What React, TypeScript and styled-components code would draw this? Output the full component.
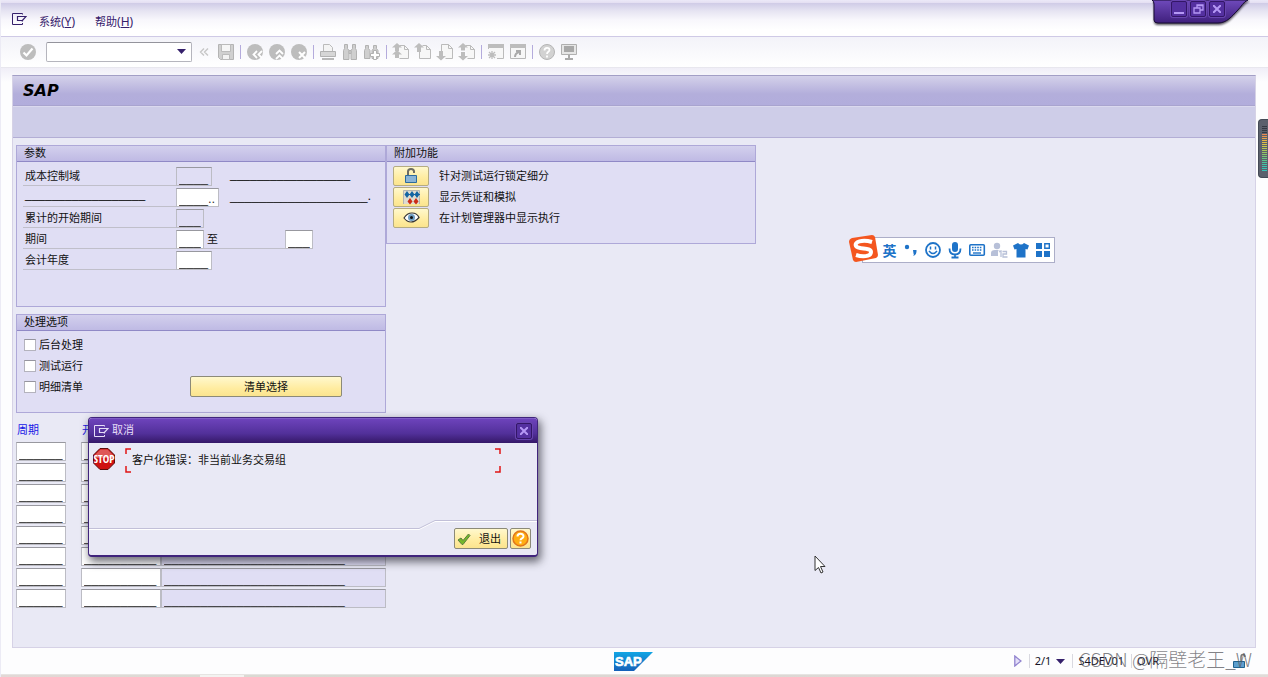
import React from "react";
import styled, { createGlobalStyle, css } from "styled-components";

const GlobalStyle = createGlobalStyle`
  * { box-sizing: border-box; }
  body {
    margin: 0;
    background: #fdfdfe;
    color: #111;
    font: 11px/16px "Noto Sans", "Noto Sans CJK SC", sans-serif;
  }
  button, input { font: inherit; color: inherit; margin: 0; }
  svg { display: block; }
`;

/* ---------- shell ---------- */

const Screen = styled.div`
  position: relative;
  display: flex;
  flex-direction: column;
  min-height: 100vh;
  overflow: hidden;
  border-left: 1px solid #ecebf5;
`;

const MenuBar = styled.nav`
  display: flex;
  align-items: center;
  height: 37px;
  padding: 8px 11px 0;
  border-bottom: 1px solid #cfcae6;
  background: linear-gradient(#ece9f8 0, #e4dff2 3px, #cfcbe6 3px, #e6e4f2 11px, #f8f7fc 20px, #fff 30px);
  color: #35206b;
`;

const MenuIcon = styled.span`
  margin: -6px 12px 0 0;
`;

const MenuItem = styled.button`
  height: 20px;
  margin-right: 20px;
  padding: 0;
  border: 0;
  background: none;
  font-size: 11px;
`;

const Mnemonic = styled.span`
  font-size: 12px;
`;

const ToolBar = styled.div`
  display: flex;
  align-items: center;
  height: 31px;
  padding: 0 0 1px 16px;
  border-bottom: 1px solid #e8e7ee;
  background: linear-gradient(#f3f3f9, #fff);
`;

const ToolButton = styled.button`
  display: grid;
  place-items: center;
  width: 22px;
  height: 22px;
  padding: 0;
  border: 0;
  background: none;
  color: #bdbdbd;
`;

const Separator = styled.span`
  width: 1px;
  height: 14px;
  margin: 0 3px;
  background: #b4abdc;
`;

const CommandBox = styled.div`
  display: flex;
  align-items: center;
  width: 146px;
  height: 20px;
  margin: 0 1px 0 7px;
  border: 1px solid #b5b5bd;
  border-top-color: #94949c;
  border-radius: 2px;
  background: #fff;
`;

const CommandInput = styled.input`
  flex: 1;
  min-width: 0;
  height: 16px;
  border: 0;
  outline: 0;
  background: none;
`;

const BareButton = styled.button`
  display: grid;
  place-items: center;
  width: 20px;
  height: 16px;
  padding: 0;
  border: 0;
  background: none;
`;

const Workspace = styled.main`
  display: flex;
  flex: 1;
  flex-direction: column;
  padding: 7px 12px 0 11px;
  background: linear-gradient(#f0eef7, #fdfdfe 14px);
`;

const Frame = styled.section`
  flex: 1;
  border: 1px solid #d6d2e6;
  border-top-color: #a39fc6;
  background: #e9e9f5;
`;

const TitleBand = styled.header`
  height: 30px;
  padding: 0 10px;
  border-bottom: 1px solid #a9a4cf;
  background: linear-gradient(#d4d1ea, #b3aedb 18px, #b2addc);
`;

const Title = styled.h1`
  margin: 0;
  color: #000;
  font: italic bold 16px/30px "DejaVu Sans", sans-serif;
`;

const ActionBand = styled.div`
  height: 32px;
  border-top: 1px solid #dbd9ee;
  border-bottom: 1px solid #b3aed5;
  background: #cecde8;
`;

const Content = styled.div`
  display: grid;
  grid-template-columns: minmax(0, 370px) minmax(0, 370px);
  align-items: start;
  padding: 7px 3px 38px;
`;

/* ---------- panels ---------- */

const Panel = styled.section<{ $height: number }>`
  min-height: ${(p) => p.$height}px;
  border: 1px solid #aea8d8;
  background: #e0def4;
`;

const PanelTitle = styled.h2`
  height: 16px;
  margin: 0;
  padding-left: 7px;
  border-bottom: 1px solid #9089c6;
  background: linear-gradient(#d3d0ed, #bfbae4);
  font-size: 11px;
  font-weight: 400;
  line-height: 14px;
`;

const PanelBody = styled.div`
  padding: 3px 6px;
`;

const Column = styled.div`
  display: flex;
  flex-direction: column;
`;

const FieldRow = styled.div`
  display: flex;
  align-items: flex-end;
  height: 21px;
`;

const FieldLabel = styled.label`
  width: 153px;
  height: 21px;
  padding-left: 2px;
  overflow: hidden;
  border-bottom: 1px solid #c0bfca;
  font-size: 11px;
  line-height: 22px;
  white-space: nowrap;
`;

const Blank = styled.span<{ $size?: number }>`
  display: block;
  height: 20px;
  font: ${(p) => p.$size ?? 13}px/17px "Liberation Sans", sans-serif;
  white-space: nowrap;
`;

const RangeLabel = styled(FieldLabel)`
  width: 81px;
  padding-left: 3px;
`;

const Description = styled(Blank)`
  margin-left: auto;
  width: 149px;
`;

const fieldLook = css`
  height: 19px;
  padding: 2px 2px 0;
  border: 1px solid #bcbcc4;
  border-top-color: #98989f;
  border-radius: 0;
  outline: 0;
  background: #fff;
  color: #333;
  font: 13px/15px "Liberation Sans", sans-serif;
`;

const Field = styled.input<{ $width: number }>`
  ${fieldLook}
  width: ${(p) => p.$width}px;
  &:read-only { background: #e0def4; }
`;

const CheckRow = styled.div`
  display: flex;
  align-items: center;
  height: 21px;
  margin-left: 1px;
`;

const CheckLabel = styled.label`
  display: flex;
  align-items: center;
  gap: 3px;
`;

const CheckBox = styled.input`
  appearance: none;
  width: 12px;
  height: 12px;
  border: 1px solid #b4b3bd;
  border-top-color: #96959f;
  background: #fff;
  &:checked { background: #6b4fb0; }
`;

const yellow = css`
  border: 1px solid #8c8a78;
  border-radius: 2px;
  background: linear-gradient(#fff8cd, #ffeca0 60%, #fbe48e);
`;

const ListButton = styled.button`
  ${yellow}
  width: 152px;
  height: 21px;
  margin-left: 107px;
  padding: 0;
`;

const ExtraRow = styled.div`
  display: flex;
  align-items: center;
  gap: 10px;
  height: 21px;
`;

const ExtraButton = styled.button`
  ${yellow}
  display: grid;
  place-items: center;
  width: 36px;
  height: 20px;
  padding: 0;
  border-color: #b5ac82;
`;

/* ---------- period table ---------- */

const PeriodTable = styled.table`
  width: 370px;
  margin-top: 7px;
  border-collapse: collapse;
  table-layout: fixed;

  th {
    height: 21px;
    padding: 0 0 1px 1px;
    color: #1717e6;
    font-weight: 400;
    text-align: left;
    line-height: 18px;
  }
  td { height: 21px; padding: 0; vertical-align: middle; }
  ${Field} { display: block; }
`;

/* ---------- dialog ---------- */

const Dialog = styled.div`
  position: absolute;
  top: 417px;
  left: 87px;
  display: flex;
  flex-direction: column;
  width: 450px;
  height: 140px;
  border: 1px solid #40247c;
  border-bottom-width: 2px;
  border-radius: 4px;
  overflow: hidden;
  background: #e9e9f5;
  box-shadow: 2px 4px 8px 1px rgba(40, 40, 50, 0.65);
`;

const DialogTitle = styled.header`
  display: flex;
  align-items: center;
  gap: 3px;
  height: 25px;
  padding: 0 5px;
  border-top: 1px solid #7e5cc6;
  background: linear-gradient(#6d43bb, #52309a 60%, #351868);
  color: #e6def8;
`;

const DialogName = styled.h2`
  flex: 1;
  margin: 0;
  padding-bottom: 3px;
  font-size: 11px;
  font-weight: 400;
  line-height: 16px;
`;

const DarkButton = styled.button`
  display: grid;
  place-items: center;
  width: 16px;
  height: 16px;
  padding: 0;
  border: 1px solid #331667;
  border-radius: 2px;
  background: #5430a0;
  color: #b598f5;
  box-shadow: 0 0 0 1px #6744ae;
`;

const MessageRow = styled.div`
  display: flex;
  gap: 10px;
  padding: 5px 0 0 4px;
`;

const MessageFrame = styled.p`
  display: flex;
  align-items: center;
  justify-content: space-between;
  height: 25px;
  margin: 0;
  width: 376px;
`;

const MessageText = styled.span`
  flex: 1;
  padding: 0 0 2px 1px;
`;

const DialogFoot = styled.footer`
  margin-top: auto;
`;

const FootLine = styled.svg`
  width: 100%;
  height: 10px;
`;

const FootButtons = styled.div`
  display: flex;
  justify-content: flex-end;
  gap: 2px;
  margin-top: -2px;
  padding: 0 6px 6px;
`;

const FootButton = styled.button<{ $width: number }>`
  ${yellow}
  display: flex;
  align-items: center;
  justify-content: center;
  gap: 8px;
  width: ${(p) => p.$width}px;
  height: 21px;
  padding: 0;
`;

const ExitButton = styled(FootButton)`
  justify-content: flex-start;
  padding-left: 2px;
`;

/* ---------- floating pieces ---------- */

const WindowTab = styled.div`
  position: absolute;
  top: 0;
  right: 18px;
  width: 98px;
  height: 30px;
`;

const TabShape = styled.svg`
  position: absolute;
  inset: 0;
`;

const TabButtons = styled.div`
  position: relative;
  display: flex;
  gap: 3px;
  padding: 1px 0 0 19px;
`;

const ImeBar = styled.div`
  position: absolute;
  top: 237px;
  left: 861px;
  display: flex;
  align-items: center;
  gap: 4px;
  width: 193px;
  height: 26px;
  padding: 0 2px 0 18px;
  border: 1px solid #acaec8;
  background: #fff;
  color: #1e73c8;
`;

const ImeLogo = styled.span`
  position: absolute;
  top: -5px;
  left: -15px;
`;

const ImeButton = styled.button`
  display: grid;
  place-items: center;
  width: 18px;
  height: 20px;
  padding: 0;
  border: 0;
  background: none;
  font: bold 14px/20px "Noto Sans CJK SC", sans-serif;
`;

const Gauge = styled.div`
  position: absolute;
  top: 119px;
  right: 0;
  display: flex;
  justify-content: flex-end;
  width: 10px;
  height: 59px;
  padding: 6px 1px 0 0;
  border: 1px solid #444a56;
  border-right: 0;
  border-radius: 4px 0 0 4px;
  background: #5b606c;
`;

const Pointer = styled.svg`
  position: absolute;
  top: 555px;
  left: 813px;
`;

const StatusBar = styled.footer`
  display: grid;
  grid-template-columns: 1fr auto 1fr;
  align-items: center;
  height: 26px;
  padding-right: 2px;
`;

const StatusInfo = styled.div`
  display: flex;
  align-items: center;
  justify-content: flex-end;
  padding-right: 20px;
  color: #161428;
`;

const StatusItem = styled.span<{ $gap?: number }>`
  display: flex;
  align-items: center;
  gap: 5px;
  margin-right: ${(p) => p.$gap ?? 7}px;
`;

const StatusRule = styled.span`
  width: 1px;
  height: 14px;
  margin-right: 5px;
  background: #d9d9e0;
`;

const Watermark = styled.span`
  position: absolute;
  right: 16px;
  bottom: 6px;
  color: rgba(90, 90, 96, 0.75);
  font: 300 19px/26px "Noto Sans CJK SC", sans-serif;
  white-space: nowrap;
`;

const TaskStrip = styled.div`
  height: 4px;
  border-top: 1px solid #e6e4e2;
  background: linear-gradient(90deg, #e3d8d6, #dbdbd4 199px, #f3f3f1 199px 243px, #dadad3 243px, #dcd7d3 50%, #e1dcd9);
`;

/* ---------- icons ---------- */

const ExitIcon = () => (
  <svg width="15" height="12" viewBox="0 0 15 12" fill="none" stroke="currentColor">
    <path d="M10.500 1.500V.500h-10v11h10V10" />
    <path d="M5.500 3.500h8.500l-3.500 4h-5zM11 6.500l-1 2" strokeWidth="1.200" />
  </svg>
);

const Caret = () => (
  <svg width="9" height="5" viewBox="0 0 9 5"><path d="M0 0h9L4.500 5z" fill="#35206b" /></svg>
);

const CrossIcon = () => (
  <svg width="8" height="8" viewBox="0 0 8 8" stroke="currentColor" strokeWidth="2"><path d="M0 0l8 8M8 0L0 8" /></svg>
);

const toolArt: Record<string, React.ReactNode> = {
  enter: <><circle cx="9" cy="9" r="8" fill="currentColor" /><path d="M4.500 9.500l3 3 6-7" stroke="#fff" strokeWidth="2.200" fill="none" /></>,
  collapse: <path d="M9 5.500L5.500 9 9 12.500M13 5.500L9.500 9l3.500 3.500" stroke="#c6c6c6" strokeWidth="1.400" fill="none" />,
  save: <><path d="M1.500 1.500h15v15h-13l-2-2z" fill="#d0d0d0" stroke="#b4b4b4" /><path d="M4.500 1.500h9v7h-9z" fill="#f6f6f6" stroke="#bbb" /><path d="M5.500 11.500h7v5h-7z" fill="#f3f3f3" stroke="#bbb" /></>,
  back: <><circle cx="9" cy="9" r="8" fill="currentColor" /><path d="M11 8l-3.500 3.500L11 15M16 8l-3.500 3.500L16 15" stroke="#fff" strokeWidth="1.800" fill="none" /></>,
  up: <><circle cx="9" cy="9" r="8" fill="currentColor" /><path d="M8 11l3.500-3.500L15 11M8 16l3.500-3.500L15 16" stroke="#fff" strokeWidth="1.800" fill="none" /></>,
  cancel: <><circle cx="9" cy="9" r="8" fill="currentColor" /><path d="M9 9l6 6M15 9l-6 6" stroke="#fff" strokeWidth="2" /></>,
  print: <><path d="M4.500 8V1.500h6l3 3V8" fill="#f4f4f4" stroke="#bbb" /><path d="M1.500 8.500h15v5h-15z" fill="#d6d6d6" stroke="#b2b2b2" /><path d="M3 16h12" stroke="#b8b8b8" strokeWidth="2" /></>,
  find: <g fill="#cfcfcf" stroke="#b2b2b2"><path d="M3.500 1.500h3v4l1.500 2v9H2.500v-9l1-2zM11.500 1.500h3v4l1 2v9H10v-9l1.500-2z" /><path d="M8 7.500h2v3H8z" /></g>,
  findNext: <g fill="#cfcfcf" stroke="#b2b2b2"><path d="M2.500 2.500h3v3l1.500 2v8H1.500v-8l1-2zM10.500 2.500h3v3l1.500 2v8H9v-8l1.500-2z" /><path d="M10.500 10.500v-3h3v3h3v3h-3v3h-3v-3h-3v-3z" fill="#fff" /></g>,
  first: <><path d="M7.500 2.500h5l4 4v9h-9" fill="#f7f7f7" stroke="#bbb" /><path d="M12.500 2.500v4h4" fill="none" stroke="#bbb" /><path d="M5 0l5 4.500H7V8H3V4.500H0zM5 7l5 4.500H7V15H3v-3.500H0z" /></>,
  prev: <><path d="M5.500 8v7.500h11v-9l-4-4h-4" fill="#f7f7f7" stroke="#bbb" /><path d="M12.500 2.500v4h4" fill="none" stroke="#bbb" /><path d="M5 0l5 4.500H7V9H3V4.500H0z" /></>,
  next: <><path d="M5.500 9V1.500h7l4 4v10h-7" fill="#f7f7f7" stroke="#bbb" /><path d="M12.500 1.500v4h4" fill="none" stroke="#bbb" /><path d="M5 17.500L10 13H7V8H3v5H0z" /></>,
  last: <><path d="M7.500 2.500h5l4 4v9h-7" fill="#f7f7f7" stroke="#bbb" /><path d="M12.500 2.500v4h4" fill="none" stroke="#bbb" /><path d="M5 0l5 4.500H7v3H3v-3H0zM5 17.500L10 13H7V9H3v4H0z" /></>,
  session: <><path d="M1.500 6V1.500h15v14H10" fill="#f7f7f7" stroke="#bbb" /><path d="M1 1h16v4H1z" /><path d="M5 8v8M1 12h8M2 9l6 6M8 9l-6 6" stroke="currentColor" strokeWidth="1.300" /></>,
  shortcut: <><path d="M1.500 1.500h15v14h-15z" fill="#f7f7f7" stroke="#b8b8b8" /><path d="M1 1h16v4H1z" /><path d="M6 14c0-3 1-4 4-5M7 8h4v4" fill="none" stroke="#aaa" strokeWidth="2" /></>,
  help: <><circle cx="9" cy="9" r="7.500" fill="#d2d2d2" stroke="#b5b5b5" /><path d="M6.500 7.500c0-3.500 5-3.500 5-.500 0 2-2.500 1.500-2.500 4M9 12.500v2" stroke="#fff" strokeWidth="1.800" fill="none" /></>,
  layout: <><path d="M1.500 1.500h15v10h-15z" fill="#e6e6e6" stroke="#b0b0b0" /><path d="M4 3h10v6H4z" fill="#a8a8a8" /><path d="M8 12h2v3h3v2H5v-2h3z" fill="#aaa" /></>,
};

const Tool = ({ name }: { name: string }) => (
  <ToolButton type="button" aria-label={name}>
    <svg width="18" height="18" viewBox="0 0 18 18" fill="currentColor">{toolArt[name]}</svg>
  </ToolButton>
);

const toolGroups = [
  ["back", "up", "cancel"],
  ["print", "find", "findNext"],
  ["first", "prev", "next", "last"],
  ["session", "shortcut"],
  ["help", "layout"],
];

const LockIcon = () => (
  <svg width="14" height="15" viewBox="0 0 14 15">
    <path d="M4 7V3.500Q4 1 7 1t3 2.500V5" fill="none" stroke="#6c6c64" strokeWidth="2" />
    <path d="M1.500 7.500h11v7h-11z" fill="#8bb4d6" stroke="#2d6b9c" />
  </svg>
);

const SimulateIcon = () => (
  <svg width="17" height="16" viewBox="0 0 17 16">
    <path d="M.5 15V1.500h16V15" fill="#dedbd0" stroke="#b5b5b0" />
    <path d="M2 5.500h15" stroke="#1264a3" />
    <path d="M4 2l2.500 3.500L4 9 1.500 5.500zM9 2l2.500 3.500L9 9 6.500 5.500zM14 2l2.500 3.500L14 9l-2.500-3.500z" fill="#1264a3" />
    <path d="M7 9l2.500 3.500L7 15.500l-2.500-3zM13 9l2.500 3.500-2.500 3-2.500-3z" fill="#cc2b16" />
  </svg>
);

const EyeIcon = () => (
  <svg width="17" height="11" viewBox="0 0 17 11">
    <path d="M1 6Q4 1 9 1t7 4.500Q12 10 8 10T1 6z" fill="#fff" stroke="#333" strokeWidth="1.200" />
    <circle cx="8.500" cy="5.500" r="3.500" fill="#6c9dc2" />
    <circle cx="8.500" cy="5.500" r="1.500" fill="#111" />
  </svg>
);

const StopIcon = () => (
  <svg width="22" height="22" viewBox="0 0 22 22">
    <path d="M7 .5h8L21.500 7v8L15 21.500H7L.5 15V7z" fill="#cf1111" stroke="#5c0c0c" />
    <path d="M7.500 1.500h7L20 7v3H2V7z" fill="#df5858" />
    <text x="11" y="15" textAnchor="middle" fill="#fff" fontSize="11" fontWeight="400" fontFamily="'Open Sans Condensed', 'Liberation Sans Narrow', sans-serif">STOP</text>
  </svg>
);

const Brackets = ({ flip }: { flip?: boolean }) => (
  <svg width="6" height="25" viewBox="0 0 6 25" fill="none" stroke="#e01414" strokeWidth="1.500">
    {flip ? <path d="M0 1h5v5M0 24h5v-6" /> : <path d="M6 1H1v5M6 24H1v-6" />}
  </svg>
);

const CheckIcon = () => (
  <svg width="14" height="12" viewBox="0 0 14 12">
    <path d="M1 7l3-2 2 2.500L11.500 1 13 2.500 6 11.500H5z" fill="#74b82a" stroke="#5b7d42" />
  </svg>
);

const HelpIcon = () => (
  <svg width="17" height="17" viewBox="0 0 17 17">
    <circle cx="8.500" cy="8.500" r="7.500" fill="#ffae12" stroke="#e0761b" strokeWidth="1.500" />
    <path d="M5.500 6.500C5.500 3 11.500 3 11.500 6.200c0 2.300-3 2-3 4M8.500 11.500v2" fill="none" stroke="#fff" strokeWidth="2" />
  </svg>
);

const SapLogo = () => (
  <svg width="39" height="19" viewBox="0 0 39 19" role="img" aria-label="SAP">
    <defs>
      <linearGradient id="sapBlue" x1="0" y1="0" x2="0" y2="1">
        <stop offset="0" stopColor="#12a5e4" />
        <stop offset="1" stopColor="#1560b9" />
      </linearGradient>
    </defs>
    <path d="M0 0h39L20 19H0z" fill="url(#sapBlue)" />
    <text x="1" y="14" fill="#fff" stroke="#fff" strokeWidth=".6" fontSize="13" fontWeight="700" fontFamily="'Liberation Sans', sans-serif">SAP</text>
  </svg>
);

const gaugeColors = [
  "#343842", "#343842", "#343842", "#343842",
  "#ee8a50", "#eb944c", "#e8a548", "#e6b544", "#e0c045", "#d6c448",
  "#c8c74c", "#b8c852", "#a8c858", "#97c85f", "#86c868", "#76c873",
  "#66c87f", "#57c88c", "#4ac79a", "#40c6a6", "#3ac5ae", "#37c4b4", "#35c3b8",
];

const GaugeScale = () => (
  <svg width="5" height="46" viewBox="0 0 5 46" shapeRendering="crispEdges">
    {gaugeColors.map((color, i) => <rect key={i} y={i * 2} width="5" height="1" fill={color} />)}
  </svg>
);

const imeArt: [string, React.ReactNode][] = [
  ["标点", <g key="p"><circle cx="5" cy="6" r="2.200" /><path d="M11 9h3.500q.5 5-3.500 6 1.500-1.500.5-2.500z" /></g>],
  ["表情", <g key="e" fill="none" stroke="currentColor" strokeWidth="1.800"><circle cx="9" cy="9" r="7" /><path d="M6.500 5.500v3M11.500 5.500v3M5 10q4 5 8 0" strokeWidth="1.500" /></g>],
  ["语音", <g key="v"><rect x="6" y="1" width="6" height="10" rx="3" /><path d="M3.500 7.500q0 6 5.500 6t5.500-6M9 13.500V17M5.500 16.500h7" fill="none" stroke="currentColor" strokeWidth="1.800" /></g>],
  ["键盘", <g key="k"><rect x="1.800" y="3.800" width="14.500" height="10.500" rx="1" fill="none" stroke="currentColor" strokeWidth="1.600" /><path d="M4 6.500h10M4 9h10" stroke="currentColor" strokeWidth="1.600" strokeDasharray="1.600 1" /><path d="M5 12h8" stroke="currentColor" strokeWidth="1.400" /></g>],
  ["账号", <g key="a" fill="#b7c0d8"><circle cx="7" cy="5" r="3.200" /><path d="M1 15V12q0-3 4-3h4q3 0 3 3v3z" /><path d="M8 9.500h10v7.500H8z" fill="#fff" /><path d="M9 11l2-1v6M12.500 10.500h4v2.500h-3.500v3h4.500" fill="none" stroke="#b7c0d8" strokeWidth="1.300" /></g>],
  ["皮肤", <path key="s" d="M6 2q3 3 6 0l5 2.500-1.500 4-2-.5v8.500h-9V8l-2 .5L1 4.500z" />],
  ["工具", <g key="t"><path d="M2 2h6v6H2zM2 10h6v6H2zM10 10h6v6h-6z" /><path d="M10.800 2.800h4.500v4.500h-4.500z" fill="none" stroke="currentColor" strokeWidth="1.400" /></g>],
];

/* ---------- page ---------- */

const u = (n: number) => "_".repeat(n);

const extras: [string, React.ReactNode][] = [
  ["针对测试运行锁定细分", <LockIcon key="l" />],
  ["显示凭证和模拟", <SimulateIcon key="s" />],
  ["在计划管理器中显示执行", <EyeIcon key="e" />],
];

const Parameters = () => (
  <Panel $height={162}>
    <PanelTitle>参数</PanelTitle>
    <PanelBody>
      <FieldRow>
        <FieldLabel htmlFor="area">成本控制域</FieldLabel>
        <Field id="area" $width={36} defaultValue={u(4)} readOnly />
        <Description $size={12}>{u(18)}</Description>
      </FieldRow>
      <FieldRow>
        <FieldLabel htmlFor="version"><Blank $size={12}>{u(18)}</Blank></FieldLabel>
        <Field id="version" $width={43} defaultValue={u(4) + ".."} />
        <Description>{u(19)}.</Description>
      </FieldRow>
      <FieldRow>
        <FieldLabel htmlFor="start">累计的开始期间</FieldLabel>
        <Field id="start" $width={28} defaultValue={u(3)} readOnly />
      </FieldRow>
      <FieldRow>
        <FieldLabel htmlFor="from">期间</FieldLabel>
        <Field id="from" $width={28} defaultValue={u(3)} />
        <RangeLabel htmlFor="to">至</RangeLabel>
        <Field id="to" $width={28} defaultValue={u(3)} />
      </FieldRow>
      <FieldRow>
        <FieldLabel htmlFor="year">会计年度</FieldLabel>
        <Field id="year" $width={36} defaultValue={u(4)} />
      </FieldRow>
    </PanelBody>
  </Panel>
);

const OptionsPanel = styled(Panel)`
  margin-top: 7px;
`;

const Options = () => (
  <OptionsPanel $height={99}>
    <PanelTitle>处理选项</PanelTitle>
    <PanelBody>
      {["后台处理", "测试运行", "明细清单"].map((name, i) => (
        <CheckRow key={name}>
          <CheckLabel><CheckBox type="checkbox" />{name}</CheckLabel>
          {i === 2 && <ListButton type="button">清单选择</ListButton>}
        </CheckRow>
      ))}
    </PanelBody>
  </OptionsPanel>
);

const Periods = () => (
  <PeriodTable>
    <colgroup><col width="65" /><col width="80" /><col /></colgroup>
    <thead><tr><th>周期</th><th>开始</th><th /></tr></thead>
    <tbody>
      {Array.from({ length: 8 }, (_, i) => (
        <tr key={i}>
          <td><Field $width={50} aria-label={`周期 ${i + 1}`} defaultValue={u(6)} /></td>
          <td><Field $width={80} aria-label={`开始 ${i + 1}`} defaultValue={u(10)} /></td>
          <td><Field $width={225} aria-label={`说明 ${i + 1}`} defaultValue={u(25)} readOnly /></td>
        </tr>
      ))}
    </tbody>
  </PeriodTable>
);

const ErrorDialog = () => (
  <Dialog role="dialog" aria-label="取消">
    <DialogTitle>
      <ExitIcon />
      <DialogName>取消</DialogName>
      <DarkButton type="button" aria-label="关闭"><CrossIcon /></DarkButton>
    </DialogTitle>
    <MessageRow>
      <StopIcon />
      <MessageFrame>
        <Brackets />
        <MessageText>客户化错误：非当前业务交易组</MessageText>
        <Brackets flip />
      </MessageFrame>
    </MessageRow>
    <DialogFoot>
      <FootLine viewBox="0 0 448 10" fill="none">
        <path d="M0 9.500h330l16-8h102" stroke="#fff" />
        <path d="M0 8.500h330l16-8h102" stroke="#c2c0d8" />
      </FootLine>
      <FootButtons>
        <ExitButton type="button" $width={54}><CheckIcon />退出</ExitButton>
        <FootButton type="button" $width={21} aria-label="帮助"><HelpIcon /></FootButton>
      </FootButtons>
    </DialogFoot>
  </Dialog>
);

const WindowControls = () => (
  <WindowTab>
    <TabShape width="98" height="30" viewBox="0 0 98 30">
      <defs>
        <linearGradient id="tab" x1="0" y1="0" x2="0" y2="1">
          <stop offset="0" stopColor="#6f4abc" />
          <stop offset="1" stopColor="#3f1f7c" />
        </linearGradient>
        <filter id="soft"><feGaussianBlur stdDeviation="1.200" /></filter>
      </defs>
      <path d="M1 0l1 4v17q0 4 4 4h60c9 0 14-7 19-12S93 3 98 1z" fill="#0c0716" opacity=".7" filter="url(#soft)" />
      <path d="M0 0q2 1 2 4v16q0 3 4 3h60c9 0 14-7 19-12S91 2 96 0z" fill="url(#tab)" stroke="#170a33" />
    </TabShape>
    <TabButtons>
      <DarkButton type="button" aria-label="最小化"><svg width="10" height="10" stroke="currentColor" strokeWidth="2"><path d="M0 9h10" /></svg></DarkButton>
      <DarkButton type="button" aria-label="还原"><svg width="11" height="10" fill="none" stroke="currentColor" strokeWidth="1.300"><path d="M1 4h6v5H1zM4 4V1h6v5H7M4 1.500h6" /></svg></DarkButton>
      <DarkButton type="button" aria-label="关闭窗口"><CrossIcon /></DarkButton>
    </TabButtons>
  </WindowTab>
);

export default function App() {
  return (
    <>
      <GlobalStyle />
      <Screen>
        <MenuBar>
          <MenuIcon><ExitIcon /></MenuIcon>
          <MenuItem type="button">系统<Mnemonic>(<u>Y</u>)</Mnemonic></MenuItem>
          <MenuItem type="button">帮助<Mnemonic>(<u>H</u>)</Mnemonic></MenuItem>
        </MenuBar>
        <ToolBar>
          <Tool name="enter" />
          <CommandBox>
            <CommandInput aria-label="命令" />
            <BareButton type="button" aria-label="历史"><Caret /></BareButton>
          </CommandBox>
          <Tool name="collapse" />
          <Tool name="save" />
          {toolGroups.map((group) => (
            <React.Fragment key={group[0]}>
              <Separator />
              {group.map((name) => <Tool key={name} name={name} />)}
            </React.Fragment>
          ))}
        </ToolBar>
        <Workspace>
          <Frame>
            <TitleBand><Title>SAP</Title></TitleBand>
            <ActionBand />
            <Content>
              <Column>
                <Parameters />
                <Options />
                <Periods />
              </Column>
              <Panel $height={99}>
                <PanelTitle>附加功能</PanelTitle>
                <PanelBody>
                  {extras.map(([text, icon]) => (
                    <ExtraRow key={text}>
                      <ExtraButton type="button" aria-label={text}>{icon}</ExtraButton>
                      <span>{text}</span>
                    </ExtraRow>
                  ))}
                </PanelBody>
              </Panel>
            </Content>
          </Frame>
        </Workspace>
        <StatusBar>
          <span />
          <SapLogo />
          <StatusInfo>
            <StatusItem>
              <svg width="8" height="12" viewBox="0 0 8 12"><path d="M.8 1v10L7 6z" fill="#e4dff8" stroke="#9284cf" strokeWidth="1.300" /></svg>
            </StatusItem>
            <StatusRule />
            <StatusItem>2/1 <Caret /></StatusItem>
            <StatusRule />
            <StatusItem>S4DEV01</StatusItem>
            <StatusRule />
            <StatusItem $gap={74}>OVR</StatusItem>
            <svg width="13" height="16" viewBox="0 0 13 16">
              <path d="M8 8V4q0-2.500 2-2.500T12 4" fill="none" stroke="#777" strokeWidth="1.500" />
              <path d="M.5 8.500h11v6H.5z" fill="#5d9fce" stroke="#20628f" />
            </svg>
          </StatusInfo>
        </StatusBar>
        <TaskStrip />

        <ErrorDialog />
        <WindowControls />
        <ImeBar>
          <ImeLogo>
            <svg width="31" height="31" viewBox="0 0 31 31">
              <path d="M4 5L24 2q2 0 3 2l3 18q0 2-2 3L8 29q-2 0-3-2L1 9q0-3 3-4z" fill="#f4561f" />
              <path d="M24 9C14 6 6 9 8 13s15 1 15 6-9 5-15 3" fill="none" stroke="#fff" strokeWidth="4" />
            </svg>
          </ImeLogo>
          <ImeButton type="button">英</ImeButton>
          {imeArt.map(([name, art]) => (
            <ImeButton key={name} type="button" aria-label={name}>
              <svg width="18" height="18" viewBox="0 0 18 18" fill="currentColor">{art}</svg>
            </ImeButton>
          ))}
        </ImeBar>
        <Gauge><GaugeScale /></Gauge>
        <Pointer width="13" height="19" viewBox="0 0 13 19">
          <path d="M1 1v14.500l3.500-3 2.500 5.500 2-1-2.500-5.500H11z" fill="#fff" stroke="#333" />
        </Pointer>
        <Watermark>CSDN @隔壁老王_W</Watermark>
      </Screen>
    </>
  );
}
